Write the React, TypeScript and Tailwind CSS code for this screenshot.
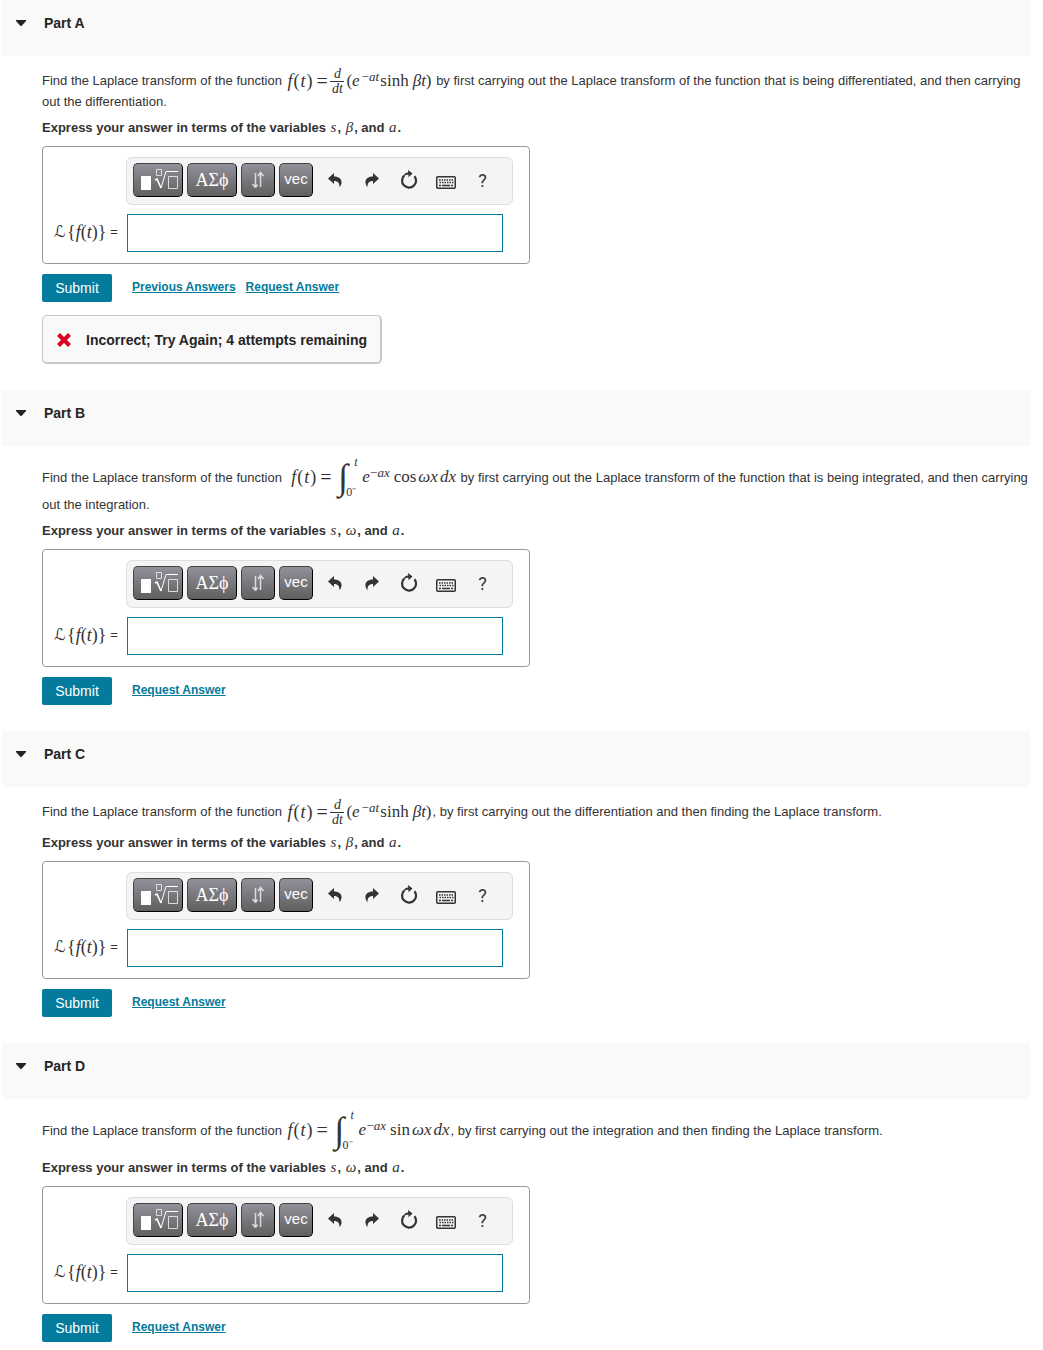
import type { ReactNode } from 'react';

interface PartProps {
  id: string;
  title: string;
  /** Problem statement, including any inline maths. */
  children: ReactNode;
  /** The middle variable of the "in terms of" line. */
  variable: string;
  /** True when the statement runs over two lines. */
  long?: boolean;
  /** Integral formulas need more room above the first line. */
  tall?: boolean;
  previousAnswers?: boolean;
  feedback?: string;
}

function Var({ children }: { children: ReactNode }) {
  return (
    <i className="px-px font-['Liberation_Serif',serif] text-[15px] leading-none font-normal">{children}</i>
  );
}

function FunctionOfT() {
  return (
    <span className="flex w-[30px] shrink-0 text-[18px]">
      <i className="px-px">f</i>(<i className="px-px">t</i>)
    </span>
  );
}

/** f(t) = d/dt (e^-at sinh βt) */
function DerivativeFormula() {
  return (
    <span className="mx-px inline-flex h-4 w-[145px] items-center pb-0.5 align-middle font-['Liberation_Serif',serif] text-[17px] leading-4 whitespace-nowrap">
      <FunctionOfT />
      <span className="w-3.5 text-[20px]">=</span>
      <span className="flex w-3.5 flex-col pt-0.5 text-center text-[14px] leading-[14px] italic">
        <span className="border-b border-[#333]">d</span>
        <span>dt</span>
      </span>
      <span className="ml-0.5 flex w-3.5">
        (<i>e</i>
      </span>
      <sup className="top-0 mb-2 w-5 text-center text-[13px] leading-3">
        −<i>at</i>
      </sup>
      <span>sinh</span>
      <span className="ml-1 flex">
        <i>β</i>
        <i>t</i>)
      </span>
    </span>
  );
}

/** f(t) = ∫ e^-ax cos|sin ωx dx */
function IntegralFormula({ trig }: { trig: string }) {
  return (
    <span className="mx-px inline-flex h-[30px] items-center pb-1 align-middle font-['Liberation_Serif',serif] text-[17px] leading-4 whitespace-nowrap">
      <FunctionOfT />
      <span className="w-[18px] text-[20px]">=</span>
      <i className="w-2 text-[36px] leading-[30px]">∫</i>
      <span className="flex w-3.5 flex-col text-[12px] leading-3">
        <i className="mb-[18px] pl-2">t</i>
        <span>0⁻</span>
      </span>
      <i className="ml-0.5">e</i>
      <sup className="top-0 mb-2 w-5 text-right text-[13px] leading-3">
        −<i>ax</i>
      </sup>
      <span className="ml-1">{trig}</span>
      <i className="ml-0.5">ωx</i>
      <i className="ml-0.5">dx</i>
    </span>
  );
}

function TemplatesIcon() {
  return (
    <svg width="40" height="24" viewBox="0 0 40 24" fill="none" stroke="white" aria-hidden="true">
      <path d="M3 8h10v14H3z" fill="white" stroke="none" />
      <path d="M18.500 1.500h5v6h-5z" stroke="#ddd" />
      <path d="M17 12l2-1 4 9" strokeWidth="1.600" />
      <path d="M23 20l5-16.500h12" />
      <path d="M30.500 8.500h9v12h-9z" stroke="#ddd" />
    </svg>
  );
}

function ArrowsIcon() {
  return (
    <svg width="14" height="18" viewBox="0 0 14 18" fill="none" stroke="#ddd" aria-hidden="true">
      <path d="M4.500 2v14M1.500 13l3 3.500M4.500 16.500l2-3" strokeWidth="1.500" />
      <path d="M9.500 16V2M7 5l2.500-3.500L12.500 5" strokeWidth="1.500" />
    </svg>
  );
}

function UndoIcon({ flip = false }: { flip?: boolean }) {
  return (
    <svg width="16" height="16" viewBox="0 0 16 16" fill="#333" className={flip ? '-scale-x-100' : ''} aria-hidden="true">
      <path d="M1 6.500L7 1v3.500c5 0 8 2.500 7.500 6.500-.2 1.600-1 3-2.200 4 .5-3.500-1-6-5.300-6V12z" />
    </svg>
  );
}

function ResetIcon() {
  return (
    <svg width="18" height="20" viewBox="0 0 18 20" fill="none" aria-hidden="true">
      <path d="M4.200 5.600A7 7 0 1 0 14.500 6.200" stroke="#333" strokeWidth="2.200" />
      <path d="M8 0l4.500 3.500L8.500 7.200V4.800C6.500 4.700 5 5.200 3.500 6.500 4 4 5.800 2.500 8.200 2.500z" fill="#333" />
    </svg>
  );
}

function KeyboardIcon() {
  return (
    <svg width="20" height="13" viewBox="0 0 20 13" fill="none" stroke="#333" aria-hidden="true">
      <rect x=".75" y=".75" width="18.500" height="11.500" rx="1" strokeWidth="1.500" />
      <path d="M3 4h14M3.500 6.500h14" strokeWidth="1.500" strokeDasharray="1.500 1" />
      <path d="M3 9.500h2M6 9.500h8M15 9.500h2" strokeWidth="1.300" />
    </svg>
  );
}

const darkButton =
  'flex h-[34px] items-center justify-center rounded-[5px] border border-[#444] border-r-black border-b-black bg-linear-to-b from-[#92919a] to-[#606060] text-white';
const plainButton = 'flex h-[34px] w-[37px] items-center justify-center';

function Toolbar() {
  return (
    <div className="flex h-12 w-[387px] items-start gap-1 rounded-md border border-[#ddd] bg-[#f4f4f4] px-1.5 pt-[5px]">
      <button type="button" aria-label="Templates" className={`${darkButton} w-[50px]`}>
        <TemplatesIcon />
      </button>
      <button type="button" className={`${darkButton} w-[50px] font-['Liberation_Serif',serif] text-[18px]`}>
        ΑΣϕ
      </button>
      <button type="button" aria-label="Arrows" className={`${darkButton} w-[34px]`}>
        <ArrowsIcon />
      </button>
      <button type="button" className={`${darkButton} w-[34px] pb-0.5 text-[15px]`}>
        vec
      </button>
      <div className="-ml-px flex">
        <button type="button" aria-label="Undo" className={plainButton}>
          <UndoIcon />
        </button>
        <button type="button" aria-label="Redo" className={plainButton}>
          <UndoIcon flip />
        </button>
        <button type="button" aria-label="Reset" className={plainButton}>
          <ResetIcon />
        </button>
        <button type="button" aria-label="Keyboard shortcuts" className={`${plainButton} pt-1`}>
          <KeyboardIcon />
        </button>
        <button type="button" aria-label="Help" className={`${plainButton} font-[Roboto,sans-serif] text-[18px] text-[#333]`}>
          ?
        </button>
      </div>
    </div>
  );
}

function AnswerBox({ id }: { id: string }) {
  return (
    <div className="mt-2 grid h-[118px] w-[488px] grid-cols-[83px_1fr] grid-rows-[48px_38px] gap-y-[9px] rounded border border-[#999] pt-2.5">
      <div className="col-start-2">
        <Toolbar />
      </div>
      <label htmlFor={id} className="flex items-center pb-0.5 pl-[11px] font-['Liberation_Serif',serif] text-[18px] whitespace-nowrap">
        <span className="w-[13px] font-['DejaVu_Sans',sans-serif] text-[16px]">ℒ</span>
        <span>{'{'}</span>
        <i>f</i>(<i>t</i>)<span>{'}'}</span>
        <span className="ml-1 font-['Liberation_Sans',sans-serif] text-[13px]">=</span>
      </label>
      <input id={id} type="text" className="ml-px w-[376px] border border-[#047a9c] bg-white px-2 text-base outline-none" />
    </div>
  );
}

function Part({
  id,
  title,
  children,
  variable,
  long = false,
  tall = false,
  previousAnswers = false,
  feedback,
}: PartProps) {
  const link = 'text-[12px] leading-5 font-bold text-[#047a9c] underline';

  return (
    <section>
      <h2 className="h-14 bg-[#f9f9f9] text-[14px] font-bold text-[#252525]">
        <button type="button" className="flex h-[46px] items-center pl-3.5">
          <svg width="10" height="6" viewBox="0 0 10 6" fill="#222" className="mr-[18px]" aria-hidden="true">
            <path d="M0 0h10v1L5.500 6h-1L0 1z" />
          </svg>
          {title}
        </button>
      </h2>
      <div className={`${tall ? 'pt-[18px]' : 'pt-3.5'} pb-[26px] pl-10`}>
        <p className="text-[13px] leading-[21px]">{children}</p>
        <p className={`${long ? 'mt-1.5' : 'mt-[11px]'} h-5 text-[13px] leading-5 font-bold`}>
          Express your answer in terms of the variables <Var>s</Var>, <Var>{variable}</Var>, and <Var>a</Var>.
        </p>
        <AnswerBox id={id} />
        <div className="mt-2.5 flex">
          <button type="button" className="mr-5 h-7 w-[70px] rounded-[2px] bg-[#047a9c] text-[14px] text-white">
            Submit
          </button>
          <div className="flex gap-2.5 pt-[3px]">
            {previousAnswers && (
              <a href="#previous" className={link}>
                Previous Answers
              </a>
            )}
            <a href="#request" className={link}>
              Request Answer
            </a>
          </div>
        </div>
        {feedback && (
          <div className="mt-[13px] flex h-[49px] w-[340px] items-center rounded-[5px] border border-r-2 border-b-2 border-[#c7c7c7] bg-[#f9f9f9] pt-0.5 pl-3.5 text-[14px] font-bold whitespace-nowrap text-[#252525]">
            <svg width="14" height="14" viewBox="0 0 14 14" stroke="#db0020" strokeWidth="4" className="mr-[15px]" aria-hidden="true">
              <path d="M1.500 1.500l11 11M12.500 1.500l-11 11" />
            </svg>
            {feedback}
          </div>
        )}
      </div>
    </section>
  );
}

export default function App() {
  return (
    <main className="bg-white pr-[13px] pl-0.5 font-['Liberation_Sans',Arial,sans-serif] text-[#333]">
      <Part
        id="answer-a"
        title="Part A"
        variable="β"
        long
        previousAnswers
        feedback="Incorrect; Try Again; 4 attempts remaining"
      >
        Find the Laplace transform of the function <DerivativeFormula /> by first carrying out the Laplace transform
        of the function that is being differentiated, and then carrying out the differentiation.
      </Part>
      <Part id="answer-b" title="Part B" variable="ω" long tall>
        Find the Laplace transform of the function &nbsp;
        <IntegralFormula trig="cos" /> by first carrying out the Laplace transform of the function that is being
        integrated, and then carrying out the integration.
      </Part>
      <Part id="answer-c" title="Part C" variable="β">
        Find the Laplace transform of the function <DerivativeFormula />, by first carrying out the differentiation
        and then finding the Laplace transform.
      </Part>
      <Part id="answer-d" title="Part D" variable="ω" tall>
        Find the Laplace transform of the function <IntegralFormula trig="sin" />, by first carrying out the
        integration and then finding the Laplace transform.
      </Part>
    </main>
  );
}
